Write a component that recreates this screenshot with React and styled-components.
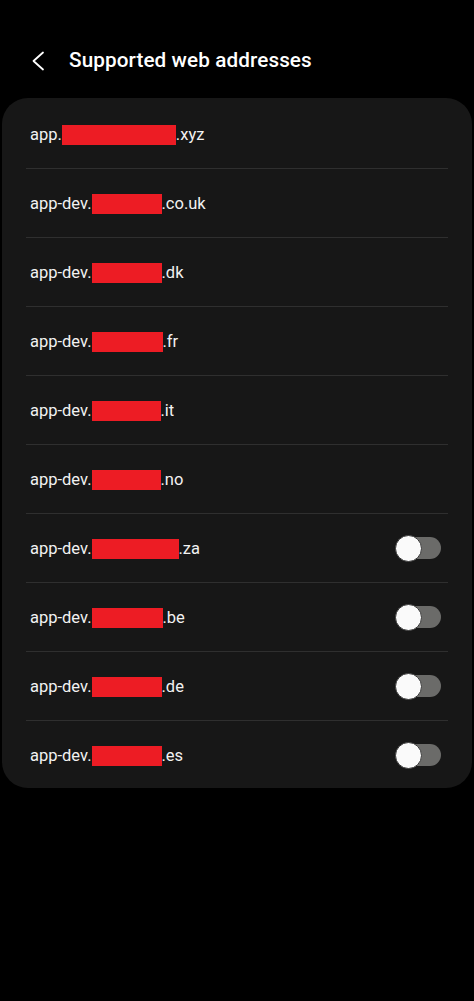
import React from 'react';
import styled, { createGlobalStyle } from 'styled-components';

const GlobalStyle = createGlobalStyle`
  html, body {
    margin: 0;
    padding: 0;
    background: #000;
  }
  body {
    font-family: Roboto, "Noto Sans", sans-serif;
    color: #fff;
  }
`;

const addresses = [
  { prefix: 'app.', hidden: 114, suffix: '.xyz' },
  { prefix: 'app-dev.', hidden: 70, suffix: '.co.uk' },
  { prefix: 'app-dev.', hidden: 70, suffix: '.dk' },
  { prefix: 'app-dev.', hidden: 71, suffix: '.fr' },
  { prefix: 'app-dev.', hidden: 69, suffix: '.it' },
  { prefix: 'app-dev.', hidden: 69, suffix: '.no' },
  { prefix: 'app-dev.', hidden: 87, suffix: '.za', toggle: true },
  { prefix: 'app-dev.', hidden: 71, suffix: '.be', toggle: true },
  { prefix: 'app-dev.', hidden: 70, suffix: '.de', toggle: true },
  { prefix: 'app-dev.', hidden: 70, suffix: '.es', toggle: true },
];

const Page = () => (
  <Screen>
    <GlobalStyle />
    <Header>
      <BackButton aria-label="Back">
        <svg width="16" height="20" viewBox="0 0 16 20" fill="none">
          <path d="M13 1.5 L3.5 10 L13 18.5" stroke="#fff" strokeWidth="1.8" strokeLinecap="round" strokeLinejoin="round" />
        </svg>
      </BackButton>
      <Title>Supported web addresses</Title>
    </Header>
    <Card>
      {addresses.map((a, i) => (
        <Row key={i} $last={i === addresses.length - 1}>
          <Address>
            {a.prefix}
            <Redacted style={{ width: a.hidden }} />
            {a.suffix}
          </Address>
          {a.toggle && (
            <Switch>
              <Knob />
            </Switch>
          )}
        </Row>
      ))}
    </Card>
  </Screen>
);

export default Page;

const Screen = styled.div`
  width: 474px;
  min-height: 1001px;
  background: #000;
`;

const Header = styled.div`
  display: flex;
  align-items: center;
  padding: 30px 0 8px 30px;
  box-sizing: border-box;
  height: 98px;
`;

const BackButton = styled.div`
  display: flex;
  align-items: center;
  width: 39px;
  margin-top: 2px;
`;

const Title = styled.h1`
  margin: 0;
  font-size: 20.7px;
  font-weight: 500;
  letter-spacing: 0.1px;
  color: #fff;
`;

const Card = styled.div`
  margin: 0 2px;
  padding: 2px 24px 0;
  background: #171717;
  border-radius: 26px;
  height: 690px;
  box-sizing: border-box;
`;

const Row = styled.div`
  display: flex;
  align-items: center;
  justify-content: space-between;
  height: ${p => (p.$last ? 68 : 69)}px;
  box-sizing: border-box;
  padding: 0 6px 0 4px;
  border-bottom: ${p => (p.$last ? 'none' : '1px solid #2f2f2f')};
`;

const Address = styled.div`
  display: flex;
  align-items: center;
  font-size: 16.5px;
  color: #f2f2f2;
`;

const Redacted = styled.span`
  display: inline-block;
  height: 20px;
  background: #ed1c24;
  margin-top: 1px;
`;

const Switch = styled.div`
  position: relative;
  width: 41px;
  height: 22px;
  border-radius: 11px;
  background: #6b6b69;
  margin-right: 1px;
`;

const Knob = styled.div`
  position: absolute;
  left: -5px;
  top: -2.5px;
  width: 25px;
  height: 25px;
  border-radius: 50%;
  background: #fafafa;
  border: 1px solid #3a3a3a;
`;
